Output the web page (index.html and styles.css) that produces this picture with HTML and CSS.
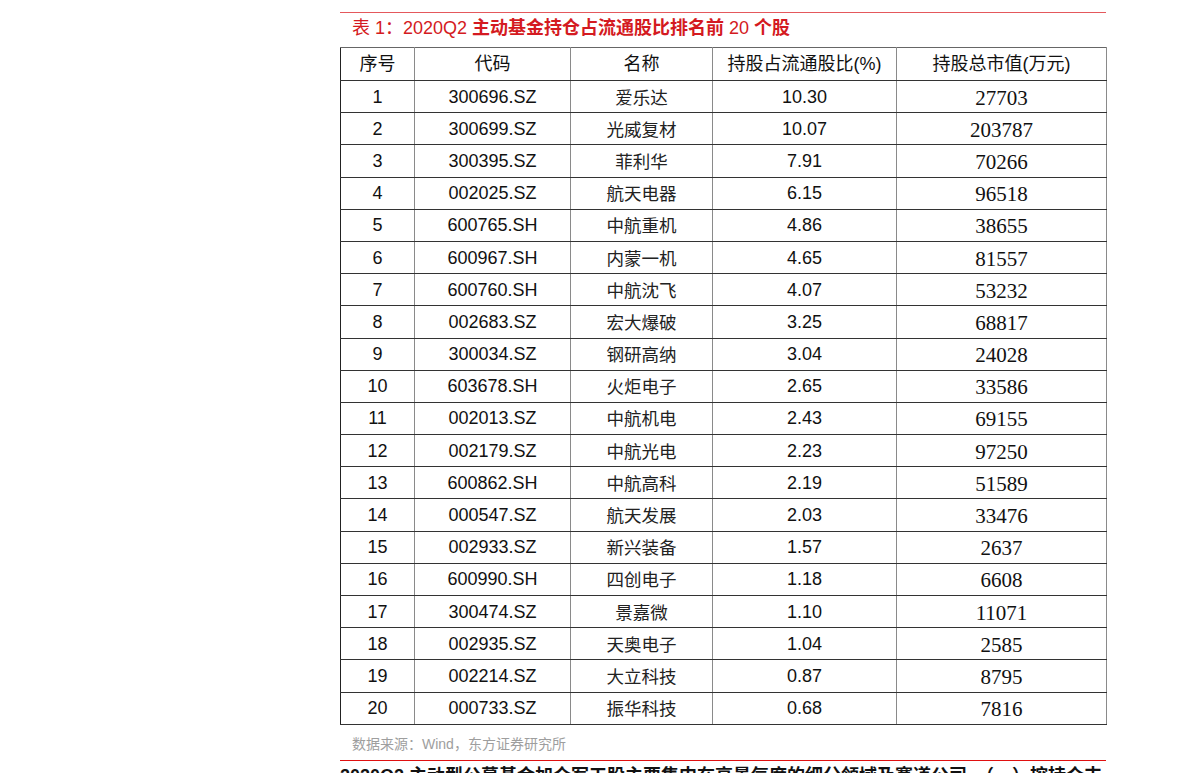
FILE: index.html
```html
<!DOCTYPE html>
<html lang="zh">
<head>
<meta charset="utf-8">
<link rel="stylesheet" href="styles.css">
</head>
<body>
<div class="page">
  <div class="rule"></div>
  <div class="title">表 1：2020Q2 <span class="b">主动基金持仓占流通股比排名前</span> 20 <span class="b">个股</span></div>
  <table class="tbl">
    <colgroup>
      <col class="c1"><col class="c2"><col class="c3"><col class="c4"><col class="c5">
    </colgroup>
    <thead>
      <tr><th>序号</th><th>代码</th><th>名称</th><th>持股占流通股比(%)</th><th>持股总市值(万元)</th></tr>
    </thead>
    <tbody>
      <tr><td>1</td><td>300696.SZ</td><td class="cn">爱乐达</td><td>10.30</td><td class="num">27703</td></tr>
      <tr><td>2</td><td>300699.SZ</td><td class="cn">光威复材</td><td>10.07</td><td class="num">203787</td></tr>
      <tr><td>3</td><td>300395.SZ</td><td class="cn">菲利华</td><td>7.91</td><td class="num">70266</td></tr>
      <tr><td>4</td><td>002025.SZ</td><td class="cn">航天电器</td><td>6.15</td><td class="num">96518</td></tr>
      <tr><td>5</td><td>600765.SH</td><td class="cn">中航重机</td><td>4.86</td><td class="num">38655</td></tr>
      <tr><td>6</td><td>600967.SH</td><td class="cn">内蒙一机</td><td>4.65</td><td class="num">81557</td></tr>
      <tr><td>7</td><td>600760.SH</td><td class="cn">中航沈飞</td><td>4.07</td><td class="num">53232</td></tr>
      <tr><td>8</td><td>002683.SZ</td><td class="cn">宏大爆破</td><td>3.25</td><td class="num">68817</td></tr>
      <tr><td>9</td><td>300034.SZ</td><td class="cn">钢研高纳</td><td>3.04</td><td class="num">24028</td></tr>
      <tr><td>10</td><td>603678.SH</td><td class="cn">火炬电子</td><td>2.65</td><td class="num">33586</td></tr>
      <tr><td>11</td><td>002013.SZ</td><td class="cn">中航机电</td><td>2.43</td><td class="num">69155</td></tr>
      <tr><td>12</td><td>002179.SZ</td><td class="cn">中航光电</td><td>2.23</td><td class="num">97250</td></tr>
      <tr><td>13</td><td>600862.SH</td><td class="cn">中航高科</td><td>2.19</td><td class="num">51589</td></tr>
      <tr><td>14</td><td>000547.SZ</td><td class="cn">航天发展</td><td>2.03</td><td class="num">33476</td></tr>
      <tr><td>15</td><td>002933.SZ</td><td class="cn">新兴装备</td><td>1.57</td><td class="num">2637</td></tr>
      <tr><td>16</td><td>600990.SH</td><td class="cn">四创电子</td><td>1.18</td><td class="num">6608</td></tr>
      <tr><td>17</td><td>300474.SZ</td><td class="cn">景嘉微</td><td>1.10</td><td class="num">11071</td></tr>
      <tr><td>18</td><td>002935.SZ</td><td class="cn">天奥电子</td><td>1.04</td><td class="num">2585</td></tr>
      <tr><td>19</td><td>002214.SZ</td><td class="cn">大立科技</td><td>0.87</td><td class="num">8795</td></tr>
      <tr><td>20</td><td>000733.SZ</td><td class="cn">振华科技</td><td>0.68</td><td class="num">7816</td></tr>
    </tbody>
  </table>
  <div class="source">数据来源：Wind，东方证券研究所</div>
  <div class="rule2"></div>
  <div class="next">2020Q2 主动型公募基金加仓军工股主要集中在高景气度的细分领域及赛道公司。（一）控持仓丰</div>
</div>
</body>
</html>
```

FILE: styles.css
```css
html, body {
  margin: 0;
  padding: 0;
  background: #fff;
  overflow: hidden;
}
body {
  font-family: "Liberation Sans", "Noto Sans CJK SC", sans-serif;
  color: #111;
}
.page {
  margin-left: 340px;
  width: 766px;
  padding-top: 12px;
}
.rule {
  height: 1px;
  background: #e4585c;
}
.title {
  color: #d41a21;
  font-size: 18px;
  line-height: 24px;
  padding: 3px 0 0 12px;
  box-sizing: border-box;
  height: 34px;
  white-space: nowrap;
}
.title .b {
  font-weight: 700;
}
.tbl {
  border-collapse: collapse;
  table-layout: fixed;
  width: 766px;
}
.c1 { width: 74px; }
.c2 { width: 156px; }
.c3 { width: 142px; }
.c4 { width: 184px; }
.c5 { width: 210px; }
.tbl tr {
  height: 32.2px;
}
.tbl thead tr {
  height: 33px;
}
.tbl th, .tbl td {
  border-top: 1.5px solid #333;
  border-bottom: 1.5px solid #333;
  border-left: 1.5px solid #8a8a8a;
  border-right: 1.5px solid #8a8a8a;
  text-align: center;
  vertical-align: middle;
  padding: 0;
  font-size: 18px;
  font-weight: 400;
  line-height: 20px;
  white-space: nowrap;
}
.tbl th {
  border-top-color: #666;
}
.tbl th:first-child, .tbl td:first-child {
  border-left-color: #222;
}
.tbl td.cn {
  color: #222;
  font-family: "Noto Sans CJK SC", sans-serif;
  font-size: 17.5px;
}
.tbl td.num {
  font-family: "Liberation Serif", "Noto Sans CJK SC", serif;
  font-size: 21px;
  padding-top: 2px;
}
.source {
  color: #9e9e9e;
  font-size: 14px;
  line-height: 18px;
  padding: 10px 0 0 12px;
  height: 35px;
  box-sizing: border-box;
}
.rule2 {
  height: 1.5px;
  background: #e01010;
}
.next {
  font-size: 18px;
  font-weight: 700;
  line-height: 24px;
  padding-top: 3px;
  white-space: nowrap;
  color: #111;
}
```
